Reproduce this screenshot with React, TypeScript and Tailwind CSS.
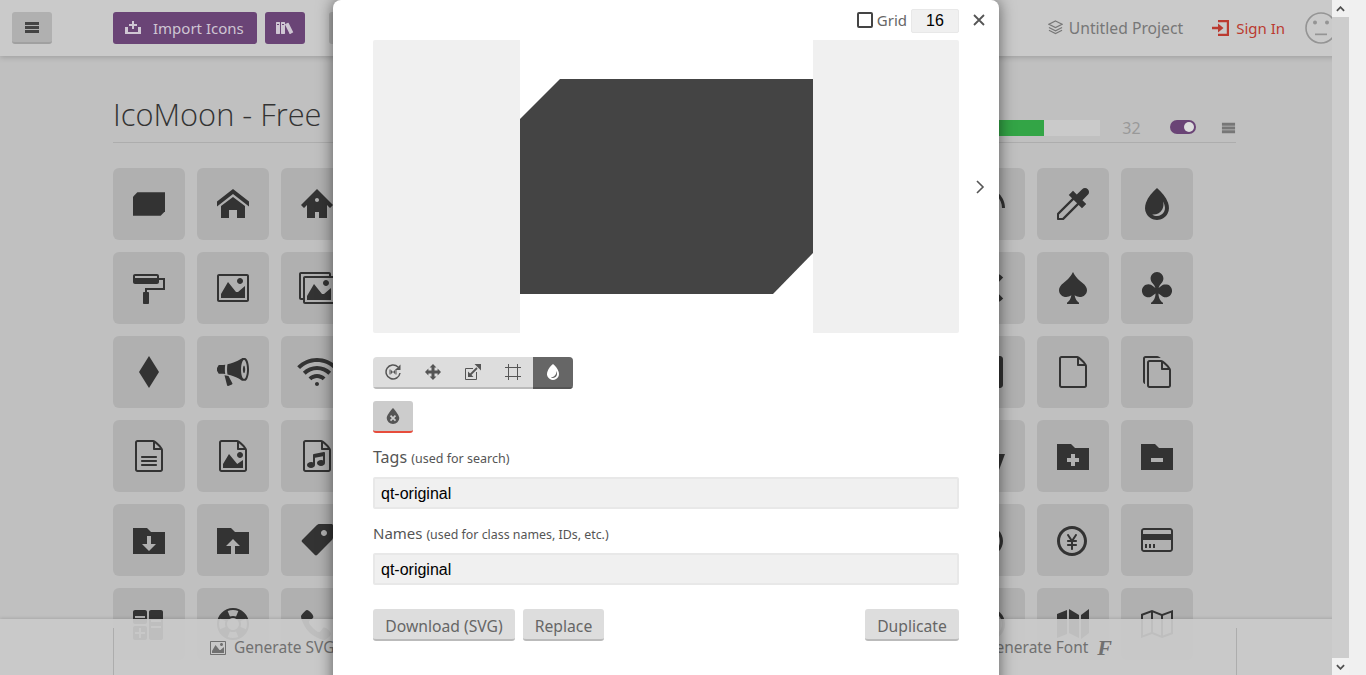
import {
  ImAddressBook, ImBarcode, ImBook, ImBooks, ImBullhorn, ImCalculator, ImCamera, ImCart,
  ImClubs, ImCoinDollar, ImCoinEuro, ImCoinPound, ImCoinYen, ImCompass, ImCompass2, ImConnection, ImCopy,
  ImCreditCard, ImDiamonds, ImDice, ImDroplet, ImEnvelop, ImEyedropper, ImFeed,
  ImFileEmpty, ImFileMusic, ImFilePicture, ImFilePlay, ImFileText, ImFileText2, ImFileVideo, ImFileZip,
  ImFilesEmpty, ImFilm, ImFolder, ImFolderDownload, ImFolderMinus, ImFolderOpen, ImFolderPlus, ImFolderUpload,
  ImHeadphones, ImHome, ImHome2, ImHome3, ImImage, ImImages, ImLibrary, ImLifebuoy, ImLocation, ImLocation2,
  ImMap, ImMap2, ImMenu, ImMic, ImMusic, ImNewspaper, ImOffice, ImPacman, ImPaintFormat, ImPaste,
  ImPen, ImPencil, ImPencil2, ImPhone, ImPhoneHangUp, ImPlay, ImPodcast, ImPriceTag, ImPriceTags, ImProfile,
  ImPushpin, ImQuill, ImQrcode, ImSpades, ImStack, ImTicket, ImVideoCamera, ImBlog,
} from 'react-icons/im';

function QtIcon({ className }: { className?: string }) {
  return (
    <svg viewBox="0 0 293 293" className={className} fill="currentColor">
      <path d="M0 79 L40 39 H293 V213 L253 254 H0 Z" />
    </svg>
  );
}

const icons = [
  QtIcon, ImHome, ImHome2, ImHome3, ImOffice, ImNewspaper, ImPencil, ImPencil2, ImQuill, ImPen, ImBlog, ImEyedropper, ImDroplet,
  ImPaintFormat, ImImage, ImImages, ImCamera, ImHeadphones, ImMusic, ImPlay, ImFilm, ImVideoCamera, ImDice, ImPacman, ImSpades, ImClubs,
  ImDiamonds, ImBullhorn, ImConnection, ImPodcast, ImFeed, ImMic, ImBook, ImBooks, ImLibrary, ImFileText, ImProfile, ImFileEmpty, ImFilesEmpty,
  ImFileText2, ImFilePicture, ImFileMusic, ImFilePlay, ImFileVideo, ImFileZip, ImCopy, ImPaste, ImStack, ImFolder, ImFolderOpen, ImFolderPlus, ImFolderMinus,
  ImFolderDownload, ImFolderUpload, ImPriceTag, ImPriceTags, ImBarcode, ImQrcode, ImTicket, ImCart, ImCoinDollar, ImCoinEuro, ImCoinPound, ImCoinYen, ImCreditCard,
  ImCalculator, ImLifebuoy, ImPhone, ImPhoneHangUp, ImAddressBook, ImEnvelop, ImPushpin, ImLocation, ImLocation2, ImCompass, ImCompass2, ImMap, ImMap2,
];

function RotateIcon() {
  return (
    <svg viewBox="0 0 16 16" className="w-4 h-4" fill="none" stroke="currentColor">
      <path d="M15 9A7 7 0 1 1 13 3" strokeWidth="1.5" />
      <path d="M15.5 0.5v5.5h-5.5z" fill="currentColor" stroke="none" />
      <path d="M5 5.5v5M11 5.5v5" strokeWidth="1" />
      <path d="M5.8 5.8L8 8l-2.2 2.2zM10.2 5.8L8 8l2.2 2.2z" fill="currentColor" stroke="none" />
    </svg>
  );
}

function MoveIcon() {
  return (
    <svg viewBox="0 0 16 16" className="w-4 h-4" fill="currentColor">
      <path d="M8 0l3.4 3.4H9.5v3.1h3.1V4.6L16 8l-3.4 3.4V9.5H9.5v3.1h1.9L8 16l-3.4-3.4h1.9V9.5H3.4v1.9L0 8l3.4-3.4v1.9h3.1V3.4H4.6z" />
    </svg>
  );
}

function ScaleIcon() {
  return (
    <svg viewBox="0 0 16 16" className="w-4 h-4" fill="none" stroke="currentColor">
      <path d="M8 4.5H.5v11h11V8" strokeWidth="1" />
      <path d="M5 11l7-7" strokeWidth="1.8" />
      <path d="M9.5 0H16v6.5z" fill="currentColor" stroke="none" />
      <path d="M3 13V7.5L8.5 13z" fill="currentColor" stroke="none" />
    </svg>
  );
}

function CropMarksIcon() {
  return (
    <svg viewBox="0 0 16 16" className="w-4 h-4" fill="none" stroke="currentColor" strokeWidth="1">
      <path d="M3.5 0v16M12.5 0v16M0 3.5h16M0 12.5h16" />
    </svg>
  );
}

function ClearColorIcon() {
  return (
    <svg viewBox="0 0 16 16" className="w-4 h-4 text-[#555555]" fill="currentColor">
      <path d="M8 0C8 0 1.7 6.8 1.7 10a6.3 6 0 0 0 12.6 0C14.3 6.8 8 0 8 0z" />
      <path d="M5.5 7.6l5 5M10.5 7.6l-5 5" stroke="#cccccc" strokeWidth="1.7" fill="none" />
    </svg>
  );
}

function ModalButton({ label, className }: { label: string; className?: string }) {
  return (
    <button className={`h-8 pt-[3px] rounded-[3px] bg-[#dddddd] border-b-2 border-[#bbbbbb] text-[#666666] text-[15.7px] leading-6 ${className ?? ''}`}>
      {label}
    </button>
  );
}

export default function App() {
  return (
    <div className="relative flex w-[1366px] h-[675px] overflow-hidden font-['Noto_Sans',sans-serif]">
      <div className="relative w-[1349px] h-full overflow-hidden bg-[#c0c0c0]">
        <header className="flex items-center h-14 pl-3 bg-[#cacaca] shadow-[0_1px_6px_rgba(0,0,0,0.2)] relative">
          <button className="flex items-center justify-center w-10 h-8 rounded-[3px] bg-[#b0b0b0] border-b-2 border-[#a0a0a0]">
            <ImMenu className="w-4 h-4 text-[#444444]" />
          </button>
          <button className="flex items-center h-8 ml-[61px] w-36 pl-3 gap-3 rounded-[3px] bg-[#6a4476] text-[#cfc6d3] text-[15px]">
            <svg viewBox="0 0 16 16" className="w-4 h-4" fill="currentColor">
              <path d="M7 1h2v3h3v2H9v3H7V6H4V4h3zM0 7h3v5h10V7h3v7H0z" />
            </svg>
            Import Icons
          </button>
          <button className="flex items-center justify-center w-10 h-8 ml-2 rounded-[3px] bg-[#6a4476] text-[#cfc6d3]">
            <ImBooks className="w-[18px] h-4" />
          </button>
          <button className="w-10 h-8 ml-6 rounded-[3px] bg-[#b0b0b0]" />
          <div className="flex items-center ml-auto">
            <span className="flex items-center gap-1.5 text-[#777777] text-[15.7px]">
              <svg viewBox="0 0 16 16" className="w-[15px] h-[15px]" fill="none" stroke="currentColor" strokeWidth="1.2">
                <path d="M8 1l7 3.5L8 8 1 4.5zM1 8l7 3.5L15 8M1 11l7 3.5L15 11" />
              </svg>
              <span className="mt-0.5">Untitled Project</span>
            </span>
            <span className="flex items-center gap-[7px] ml-[29px] text-[#bb3a30] text-[15px]">
              <svg viewBox="0 0 17 16" className="w-[17px] h-4" fill="currentColor">
                <path d="M6 0h11v16H6v-2.2h8.8V2.200H6zM0 6.800h6V3.500L11.500 8 6 12.500V9.200H0z" />
              </svg>
              Sign In
            </span>
            <svg viewBox="0 0 32 32" className="w-8 h-8 ml-5 mr-3 text-[#949494]" fill="currentColor">
              <circle cx="16" cy="16" r="15" fill="none" stroke="currentColor" strokeWidth="1.6" />
              <circle cx="10" cy="10.5" r="2" />
              <circle cx="22" cy="10.5" r="2" />
              <path d="M10 21.5h12v1.7H10z" />
            </svg>
          </div>
        </header>

        <main className="pl-[113px] pr-[113px]">
          <div className="flex items-end h-[87px] pb-[6px] w-[1123px] border-b border-[#adadad]">
            <h1 className="mb-[2px] text-[30.8px] leading-[40px] font-light font-['Open_Sans',sans-serif] text-[#333333] whitespace-nowrap">IcoMoon - Free</h1>
            <div className="flex items-center ml-auto">
              <div className="w-[300px] h-4 bg-[#cacaca]">
                <div className="w-[244px] h-4 bg-[#33a546]" />
              </div>
              <span className="w-[63px] text-center text-base leading-4 text-[#999999]">32</span>
              <span className="flex justify-end items-center w-[26px] h-[14px] ml-[7px] -mt-0.5 pr-[2px] rounded-full bg-[#6a4476]">
                <span className="w-[10px] h-[10px] rounded-full bg-[#dddddd]" />
              </span>
              <ImMenu className="w-[15px] h-[15px] ml-[25px] -mt-px text-[#777777]" />
            </div>
          </div>
          <div className="grid grid-cols-[repeat(13,72px)] gap-3 mt-[25px]">
            {icons.map((Icon, i) => (
              <div key={i} className="flex items-center justify-center h-[72px] rounded-md bg-[#b0b0b0] text-[#333333]">
                <Icon className={Icon === ImConnection ? 'w-10 h-8 shrink-0' : Icon === ImImages ? 'w-9 h-8 shrink-0' : 'w-8 h-8'} />
              </div>
            ))}
          </div>
        </main>

        {/* bottom bar sits over the grid */}
        <footer className="absolute left-0 right-0 bottom-0 h-14 bg-[#cacaca]/92 shadow-[0_-1px_3px_rgba(0,0,0,0.12)]">
          <div className="flex items-center justify-between h-[47px] mt-[9px] ml-[113px] w-[1124px] pb-[8px] pl-[96px] pr-[124px] border-x border-[#adadad] text-[15.5px] text-[#707070]">
            <span className="flex items-center gap-2">
              <ImImage className="w-4 h-4" />
              Generate SVG &amp; PDF
            </span>
            <span className="flex items-center gap-[9px]">
              Generate Font
              <span className="text-[22px] leading-none font-bold italic font-['Liberation_Serif',serif]">F</span>
            </span>
          </div>
        </footer>

        {/* scrollbar */}
        <div className="absolute top-0 right-0 bottom-0 flex flex-col justify-between w-[17px] bg-[#cdcdcd]">
          <span className="flex items-center justify-center h-[17px] bg-[#f1f1f1] text-[#505050]">
            <svg viewBox="0 0 10 6" className="w-[9px] h-[6px]" fill="none" stroke="currentColor" strokeWidth="2"><path d="M1 5l4-4 4 4" /></svg>
          </span>
          <span className="flex items-center justify-center h-[17px] bg-[#f1f1f1] text-[#505050]">
            <svg viewBox="0 0 10 6" className="w-[9px] h-[6px]" fill="none" stroke="currentColor" strokeWidth="2"><path d="M1 1l4 4 4-4" /></svg>
          </span>
        </div>

        {/* icon editor modal */}
        <div className="absolute top-0 left-[333px] w-[666px] h-[700px] px-10 rounded-lg bg-white shadow-[0_0_16px_rgba(0,0,0,0.55)]">
          <div className="flex items-center justify-end h-[40px]">
            <span className="w-4 h-4 rounded-[2px] border-2 border-[#444444]" />
            <span className="ml-1 text-[15px] text-[#666666]">Grid</span>
            <input readOnly value="16" className="w-12 h-6 mt-0.5 ml-1 text-center rounded-[2px] border border-[#e8e8e8] bg-[#f0f0f0] text-base text-black font-['Liberation_Sans',sans-serif]" />
          </div>
          <svg viewBox="0 0 12 12" className="absolute top-[14px] right-[14px] w-3 h-3 text-[#555555]" fill="none" stroke="currentColor" strokeWidth="1.8">
            <path d="M1 1l10 10M11 1L1 11" />
          </svg>
          <svg viewBox="0 0 10 14" className="absolute top-[180px] right-[14px] w-[10px] h-[14px] text-[#555555]" fill="none" stroke="currentColor" strokeWidth="1.6">
            <path d="M2 1l6 6-6 6" />
          </svg>

          <div className="flex h-[293px]">
            <div className="flex-1 rounded-l-[2px] bg-[#f0f0f0]" />
            <QtIcon className="w-[293px] h-[293px] text-[#444444]" />
            <div className="flex-1 rounded-r-[2px] bg-[#f0f0f0]" />
          </div>

          <div className="flex w-[200px] h-8 mt-6 rounded-[4px] overflow-hidden bg-[#dddddd] text-[#555555]">
            <span className="flex items-center justify-center w-10 border-b-2 border-[#bbbbbb]"><RotateIcon /></span>
            <span className="flex items-center justify-center w-10 border-b-2 border-[#bbbbbb]"><MoveIcon /></span>
            <span className="flex items-center justify-center w-10 border-b-2 border-[#bbbbbb]"><ScaleIcon /></span>
            <span className="flex items-center justify-center w-10 border-b-2 border-[#bbbbbb]"><CropMarksIcon /></span>
            <span className="flex items-center justify-center w-10 bg-[#666666] border-b-2 border-[#555555] text-white"><ImDroplet className="w-4 h-4" /></span>
          </div>

          <div className="flex items-center justify-center w-10 h-8 mt-3 rounded-[3px] bg-[#cccccc] border-b-2 border-[#e74c3c]">
            <ClearColorIcon />
          </div>

          <div className="mt-3 h-6 leading-6 text-base text-[#555555]">
            Tags <span className="text-[12.5px]">(used for search)</span>
          </div>
          <input readOnly value="qt-original" className="block w-full h-8 mt-2 pt-0.5 px-[6px] rounded-[2px] border-2 border-[#e8e8e8] bg-[#f0f0f0] text-base text-black font-['Liberation_Sans',sans-serif]" />

          <div className="mt-3 h-6 leading-6 text-[15px] text-[#555555]">
            Names <span className="text-[12.4px]">(used for class names, IDs, etc.)</span>
          </div>
          <input readOnly value="qt-original" className="block w-full h-8 mt-2 pt-0.5 px-[6px] rounded-[2px] border-2 border-[#e8e8e8] bg-[#f0f0f0] text-base text-black font-['Liberation_Sans',sans-serif]" />

          <div className="flex mt-6">
            <ModalButton label="Download (SVG)" className="w-[142px]" />
            <ModalButton label="Replace" className="w-[81px] ml-2" />
            <ModalButton label="Duplicate" className="w-[94px] ml-auto" />
          </div>
        </div>
      </div>
      <div className="w-[17px] h-full bg-[#f0f0f0]" />
    </div>
  );
}
